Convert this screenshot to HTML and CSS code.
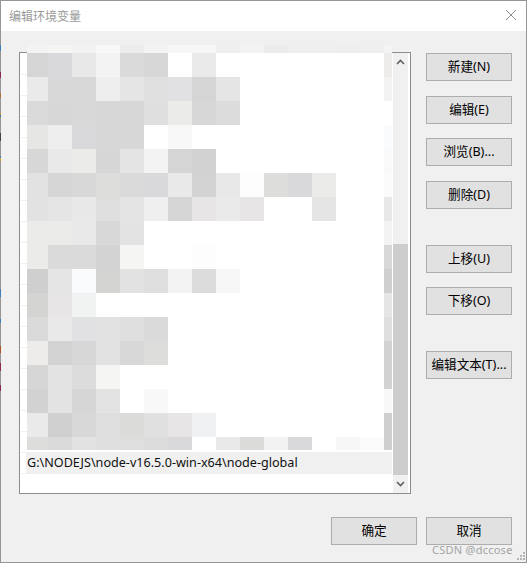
FILE: index.html
```html
<!DOCTYPE html>
<html lang="zh">
<head>
<meta charset="utf-8">
<title>编辑环境变量</title>
<link rel="stylesheet" href="styles.css">
</head>
<body>
<div class="dialog">
  <header class="titlebar">
    <span class="title">编辑环境变量</span>
    <svg class="close" width="12" height="12" viewBox="0 0 12 12"><path d="M1 1 L11 11 M11 1 L1 11" stroke="#8f8f8f" stroke-width="1" fill="none"/></svg>
  </header>
  <main class="content">
    <div class="listbox">
      <div class="rows">
        <div class="row"></div><div class="row"></div><div class="row"></div><div class="row"></div><div class="row"></div>
        <div class="row"></div><div class="row"></div><div class="row"></div><div class="row"></div><div class="row"></div>
        <div class="row"></div><div class="row"></div><div class="row"></div><div class="row"></div><div class="row"></div>
        <div class="row"></div><div class="row"></div><div class="row"></div><div class="row"></div>
        <div class="row selected"><span class="row-text">G:\NODEJS\node-v16.5.0-win-x64\node-global</span></div>
      </div>
      <div class="scrollbar">
        <div class="arrow"><svg width="9" height="6" viewBox="0 0 9 6"><path d="M1 5 L4.5 1.5 L8 5" stroke="#606060" stroke-width="1.6" fill="none"/></svg></div>
        <div class="track"><div class="thumb"></div></div>
        <div class="arrow arrow-down"><svg width="9" height="6" viewBox="0 0 9 6"><path d="M1 1 L4.5 4.5 L8 1" stroke="#606060" stroke-width="1.6" fill="none"/></svg></div>
      </div>
    </div>
    <div class="side">
      <button class="btn">新建(N)</button>
      <button class="btn gap-15">编辑(E)</button>
      <button class="btn gap-14">浏览(B)...</button>
      <button class="btn gap-15">删除(D)</button>
      <button class="btn gap-36">上移(U)</button>
      <button class="btn gap-14">下移(O)</button>
      <button class="btn gap-36">编辑文本(T)...</button>
    </div>
  </main>
  <footer class="footer">
    <button class="btn">确定</button>
    <button class="btn">取消</button>
  </footer>

  <div class="mosaic">
    <i class="g-f3"></i><i class="g-f5"></i><i class="g-f2"></i><i class="g-f8"></i><i class="g-ec"></i><i class="g-f3"></i><i class="g-f6"></i><i class="g-f6"></i><i class="g-ef"></i><i class="g-f3"></i><i class="g-ec"></i><i class="g-ef"></i><i class="g-ef"></i><i class="g-ee"></i><i class="g-ef"></i><i class="g-f4"></i>
    <i class="g-d5"></i><i class="g-d9"></i><i class="g-e8"></i><i class="g-f3"></i><i class="g-da"></i><i class="g-d7"></i><i class="g-ff"></i><i class="g-ea"></i><i class="g-ff"></i><i class="g-ff"></i><i class="g-ff"></i><i class="g-ff"></i><i class="g-ff"></i><i class="g-ff"></i><i class="g-ff"></i><i class="g-ed"></i>
    <i class="g-ea"></i><i class="g-d8"></i><i class="g-d8"></i><i class="g-ee"></i><i class="g-e5"></i><i class="g-e0"></i><i class="g-e1"></i><i class="g-d5"></i><i class="g-e5"></i><i class="g-ff"></i><i class="g-ff"></i><i class="g-ff"></i><i class="g-ff"></i><i class="g-ff"></i><i class="g-ff"></i><i class="g-f3"></i>
    <i class="g-da"></i><i class="g-d7"></i><i class="g-d8"></i><i class="g-d7"></i><i class="g-d7"></i><i class="g-df"></i><i class="g-eb"></i><i class="g-d7"></i><i class="g-dc"></i><i class="g-ff"></i><i class="g-ff"></i><i class="g-ff"></i><i class="g-ff"></i><i class="g-ff"></i><i class="g-ff"></i><i class="g-ff"></i>
    <i class="g-e6"></i><i class="g-ee"></i><i class="g-d9"></i><i class="g-d7"></i><i class="g-d7"></i><i class="g-ff"></i><i class="g-f8"></i><i class="g-ff"></i><i class="g-ff"></i><i class="g-ff"></i><i class="g-ff"></i><i class="g-ff"></i><i class="g-ff"></i><i class="g-ff"></i><i class="g-ff"></i><i class="g-fa"></i>
    <i class="g-d7"></i><i class="g-e9"></i><i class="g-eb"></i><i class="g-d6"></i><i class="g-e4"></i><i class="g-f3"></i><i class="g-d5"></i><i class="g-d2"></i><i class="g-ff"></i><i class="g-ff"></i><i class="g-ff"></i><i class="g-ff"></i><i class="g-ff"></i><i class="g-ff"></i><i class="g-ff"></i><i class="g-f9"></i>
    <i class="g-e2"></i><i class="g-d6"></i><i class="g-d8"></i><i class="g-dd"></i><i class="g-da"></i><i class="g-d9"></i><i class="g-e9"></i><i class="g-d3"></i><i class="g-e8"></i><i class="g-fd"></i><i class="g-dd"></i><i class="g-d9"></i><i class="g-eb"></i><i class="g-ff"></i><i class="g-ff"></i><i class="g-fb"></i>
    <i class="g-e2"></i><i class="g-e5"></i><i class="g-e8"></i><i class="g-de"></i><i class="g-e4"></i><i class="g-ef"></i><i class="g-d5"></i><i class="g-e7"></i><i class="g-ea"></i><i class="g-e7"></i><i class="g-ff"></i><i class="g-ff"></i><i class="g-e5"></i><i class="g-ff"></i><i class="g-ff"></i><i class="g-e8"></i>
    <i class="g-eb"></i><i class="g-eb"></i><i class="g-e9"></i><i class="g-d8"></i><i class="g-e3"></i><i class="g-ff"></i><i class="g-ff"></i><i class="g-ff"></i><i class="g-ff"></i><i class="g-ff"></i><i class="g-ff"></i><i class="g-ff"></i><i class="g-ff"></i><i class="g-ff"></i><i class="g-ff"></i><i class="g-f3"></i>
    <i class="g-eb"></i><i class="g-da"></i><i class="g-da"></i><i class="g-d3"></i><i class="g-f5"></i><i class="g-ff"></i><i class="g-ff"></i><i class="g-fd"></i><i class="g-ff"></i><i class="g-ff"></i><i class="g-ff"></i><i class="g-ff"></i><i class="g-ff"></i><i class="g-ff"></i><i class="g-ff"></i><i class="g-d8"></i>
    <i class="g-cf"></i><i class="g-e5"></i><i class="g-fa"></i><i class="g-d4"></i><i class="g-e2"></i><i class="g-de"></i><i class="g-f3"></i><i class="g-dc"></i><i class="g-f7"></i><i class="g-ff"></i><i class="g-ff"></i><i class="g-ff"></i><i class="g-ff"></i><i class="g-ff"></i><i class="g-ff"></i><i class="g-cf"></i>
    <i class="g-d4"></i><i class="g-e7"></i><i class="g-f1"></i><i class="g-ff"></i><i class="g-ff"></i><i class="g-ff"></i><i class="g-ff"></i><i class="g-ff"></i><i class="g-ff"></i><i class="g-ff"></i><i class="g-ff"></i><i class="g-ff"></i><i class="g-ff"></i><i class="g-ff"></i><i class="g-ff"></i><i class="g-e5"></i>
    <i class="g-da"></i><i class="g-e9"></i><i class="g-e1"></i><i class="g-e2"></i><i class="g-df"></i><i class="g-da"></i><i class="g-ff"></i><i class="g-ff"></i><i class="g-ff"></i><i class="g-ff"></i><i class="g-ff"></i><i class="g-ff"></i><i class="g-ff"></i><i class="g-ff"></i><i class="g-ff"></i><i class="g-df"></i>
    <i class="g-ed"></i><i class="g-d3"></i><i class="g-d7"></i><i class="g-e2"></i><i class="g-d8"></i><i class="g-dd"></i><i class="g-ff"></i><i class="g-ff"></i><i class="g-ff"></i><i class="g-ff"></i><i class="g-ff"></i><i class="g-ff"></i><i class="g-ff"></i><i class="g-ff"></i><i class="g-ff"></i><i class="g-d2"></i>
    <i class="g-d6"></i><i class="g-e3"></i><i class="g-dc"></i><i class="g-f5"></i><i class="g-ff"></i><i class="g-ff"></i><i class="g-ff"></i><i class="g-ff"></i><i class="g-ff"></i><i class="g-ff"></i><i class="g-ff"></i><i class="g-ff"></i><i class="g-ff"></i><i class="g-ff"></i><i class="g-ff"></i><i class="g-d2"></i>
    <i class="g-d2"></i><i class="g-e3"></i><i class="g-d6"></i><i class="g-e3"></i><i class="g-ff"></i><i class="g-f8"></i><i class="g-ff"></i><i class="g-ff"></i><i class="g-ff"></i><i class="g-ff"></i><i class="g-ff"></i><i class="g-ff"></i><i class="g-ff"></i><i class="g-ff"></i><i class="g-ff"></i><i class="g-f8"></i>
    <i class="g-ea"></i><i class="g-d0"></i><i class="g-d8"></i><i class="g-de"></i><i class="g-db"></i><i class="g-e0"></i><i class="g-e7"></i><i class="g-f0"></i><i class="g-ff"></i><i class="g-ff"></i><i class="g-ff"></i><i class="g-ff"></i><i class="g-ff"></i><i class="g-ff"></i><i class="g-ff"></i><i class="g-cf"></i>
    <i class="g-dd"></i><i class="g-da"></i><i class="g-e2"></i><i class="g-df"></i><i class="g-de"></i><i class="g-dc"></i><i class="g-d9"></i><i class="g-ff"></i><i class="g-e9"></i><i class="g-db"></i><i class="g-f2"></i><i class="g-d9"></i><i class="g-ff"></i><i class="g-f7"></i><i class="g-fb"></i><i class="g-cf"></i>
  </div>

  <span class="watermark">CSDN @dccose</span>
  <svg class="grip" width="9" height="9" viewBox="0 0 9 9">
    <path d="M7 0h2v2h-2z M4 3h2v2h-2z M7 3h2v2h-2z M1 6h2v2h-2z M4 6h2v2h-2z M7 6h2v2h-2z" fill="#b4b4b4"/>
  </svg>
</div>
</body>
</html>
```
FILE: styles.css
```css
* { box-sizing: border-box; }

html, body {
  margin: 0;
  padding: 0;
}

body {
  width: 527px;
  height: 563px;
  overflow: hidden;
  background: #fff;
  font-family: "Noto Sans", "Noto Sans CJK SC", sans-serif;
  font-size: 12.6px;
  color: #000;
}

.dialog {
  position: relative;
  width: 527px;
  height: 563px;
  border: 1px solid #969696;
  background: #f0f0f0;
  display: flex;
  flex-direction: column;
}

/* Sliver of the desktop windows showing along the dialog's left edge */
.dialog::before {
  content: "";
  position: absolute;
  left: -1px;
  top: 0;
  width: 1px;
  height: 561px;
  background: linear-gradient(to bottom,
    #969696 0 44px, #3f7fb5 44px 50px, #969696 50px 71px, #8a2a55 71px 77px,
    #969696 77px 92px, #a8743a 92px 97px, #969696 97px 112px, #d08a30 112px 114px,
    #3f6fa5 114px 116px, #969696 116px 132px, #444 132px 140px, #969696 140px 155px,
    #3f7fb5 155px 157px, #c9a030 157px 160px, #969696 160px 288px, #3f7fb5 288px 296px,
    #969696 296px 318px, #3f7fb5 318px 322px, #969696 322px 345px, #a8542a 345px 352px,
    #969696 352px 362px, #8a2a55 362px 370px, #969696 370px 384px, #8a2a55 384px 390px,
    #969696 390px);
}

.titlebar {
  height: 30px;
  flex: none;
  background: #fff;
  display: flex;
  align-items: center;
  justify-content: space-between;
  padding: 0 9px 2px 8px;
}

.title {
  font-size: 12px;
  color: #9a9a9a;
  font-family: "Noto Sans CJK SC", sans-serif;
}

.close { display: block; }

.content {
  display: flex;
  padding: 21px 0 0 18px;
}

.listbox {
  width: 392px;
  height: 442px;
  flex: none;
  border: 1px solid #8b8d90;
  background: #fff;
  display: flex;
}

.rows {
  flex: 1;
  padding: 1px 0 0 1px;
  min-width: 0;
}

.row {
  height: 21px;
  border-bottom: 1px solid #f0f0f0;
}

.row.selected {
  display: flex;
}

.row-text {
  flex: 1;
  height: 22px;
  margin: -1px 0 0 5px;
  padding-left: 1px;
  background: #f0f0f0;
  line-height: 22px;
  white-space: nowrap;
  color: #111;
}

.scrollbar {
  width: 18px;
  flex: none;
  padding: 0 2px 0 1px;
  display: flex;
  flex-direction: column;
}

.arrow {
  height: 17px;
  flex: none;
  background: #f0f0f0;
  display: flex;
  align-items: center;
  justify-content: center;
}

.arrow-down { height: 18px; }

.track {
  flex: 1;
  background: #f0f0f0;
  padding-top: 174px;
}

.thumb {
  height: 231px;
  background: #cdcdcd;
}

.side {
  margin-left: 15px;
  padding-top: 1px;
  display: flex;
  flex-direction: column;
}

.btn {
  width: 86px;
  height: 28px;
  flex: none;
  padding: 0 0 3px;
  border: 1px solid #adadad;
  border-radius: 0;
  background: #e1e1e1;
  font: inherit;
  color: #000;
  white-space: nowrap;
}

.gap-14 { margin-top: 14px; }
.gap-15 { margin-top: 15px; }
.gap-36 { margin-top: 36px; }

.footer {
  display: flex;
  justify-content: flex-end;
  gap: 9px;
  padding: 23px 14px 0 0;
}

.mosaic {
  position: absolute;
  left: 26px;
  top: 44px;
  display: grid;
  grid-template-columns: 21px repeat(14, 24px) 8px;
  grid-template-rows: 8px repeat(16, 24px) 13px;
}

.mosaic i { display: block; }

.g-cf { background: #cfcfcf; }
.g-d0 { background: #d0d0d0; }
.g-d2 { background: #d2d2d2; }
.g-d3 { background: #d3d3d3; }
.g-d4 { background: #d4d4d2; }
.g-d5 { background: #d5d5d5; }
.g-d6 { background: #d6d6d6; }
.g-d7 { background: #d7d7d7; }
.g-d8 { background: #d8d8d8; }
.g-d9 { background: #d9d9db; }
.g-da { background: #dadada; }
.g-db { background: #dbdbd9; }
.g-dc { background: #dcdcdc; }
.g-dd { background: #dddddb; }
.g-de { background: #dedede; }
.g-df { background: #dfdfdf; }
.g-e0 { background: #e0e0e0; }
.g-e1 { background: #e1e1e3; }
.g-e2 { background: #e2e2e2; }
.g-e3 { background: #e3e3e3; }
.g-e4 { background: #e4e4e4; }
.g-e5 { background: #e5e5e5; }
.g-e6 { background: #e6e6e4; }
.g-e7 { background: #e7e5e6; }
.g-e8 { background: #e8e8e8; }
.g-e9 { background: #e9e9e9; }
.g-ea { background: #eaeaea; }
.g-eb { background: #ebebe9; }
.g-ec { background: #ececec; }
.g-ed { background: #edecea; }
.g-ee { background: #eeeeee; }
.g-ef { background: #efefef; }
.g-f0 { background: #f0f1f3; }
.g-f1 { background: #f1f3f3; }
.g-f2 { background: #f2f2f2; }
.g-f3 { background: #f3f3f3; }
.g-f4 { background: #f4f4f4; }
.g-f5 { background: #f5f5f3; }
.g-f6 { background: #f6f6f6; }
.g-f7 { background: #f7f7f7; }
.g-f8 { background: #f8f8f8; }
.g-f9 { background: #f9f9f9; }
.g-fa { background: #fafbfd; }
.g-fb { background: #fbfbfb; }
.g-fd { background: #fdfdfd; }
.g-ff { background: #ffffff; }

.watermark {
  position: absolute;
  left: 431px;
  top: 541px;
  font-size: 11px;
  line-height: 16px;
  letter-spacing: 0.25px;
  color: #a3a3a3;
  white-space: nowrap;
}

.grip {
  position: absolute;
  right: 1px;
  bottom: 1px;
}
```
